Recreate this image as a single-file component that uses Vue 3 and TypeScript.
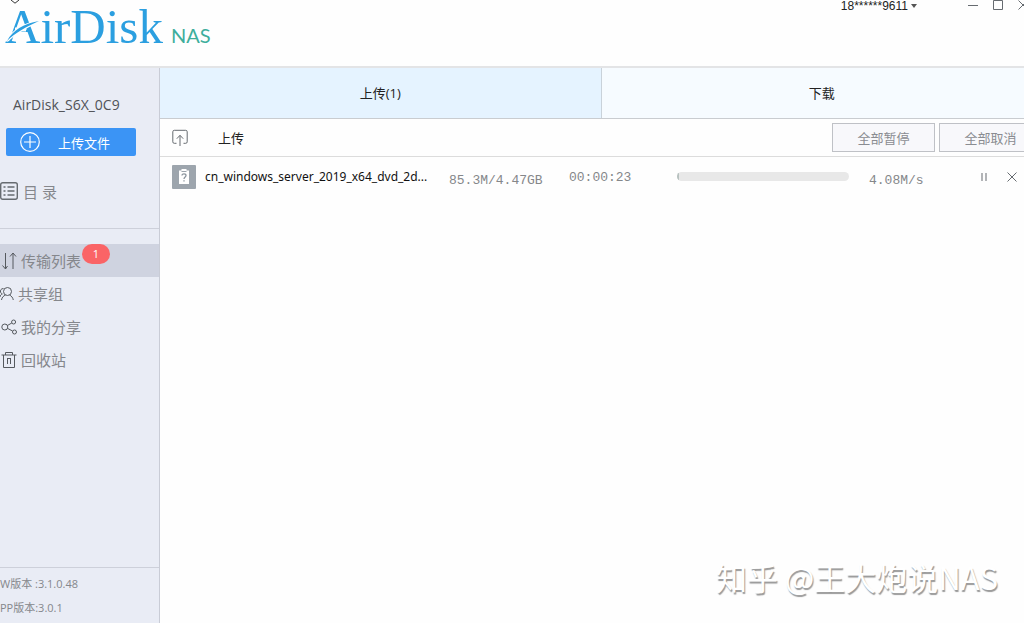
<script setup lang="ts">
import { ref } from 'vue'

interface NavItem {
  id: string
  label: string
  badge?: number
}

interface Transfer {
  name: string
  size: string
  elapsed: string
  progress: number
  speed: string
}

const account = '18******9611'
const navItems: NavItem[] = [
  { id: 'transfer', label: '传输列表', badge: 1 },
  { id: 'group', label: '共享组' },
  { id: 'share', label: '我的分享' },
  { id: 'trash', label: '回收站' },
]
const activeNav = ref('transfer')
const activeTab = ref<'upload' | 'download'>('upload')
const transfers: Transfer[] = [
  {
    name: 'cn_windows_server_2019_x64_dvd_2d...',
    size: '85.3M/4.47GB',
    elapsed: '00:00:23',
    progress: 1,
    speed: '4.08M/s',
  },
]
</script>

<template>
  <div class="window">
    <header class="titlebar">
      <svg class="corner" viewBox="0 0 10 4" aria-hidden="true"><path d="M1 0 L5 3.2 L9 0" /></svg>
      <h1 class="brand">
        <span class="brand-name">AirDisk</span>
        <svg class="swoosh" viewBox="0 0 42 24" aria-hidden="true">
          <path class="gap" d="M13 10.5H24" />
          <path class="arc" d="M5 22C11 11 21 5 37 2C24 8 13 14 5 22Z" />
        </svg>
        <span class="brand-sub">NAS</span>
      </h1>
      <div class="controls">
        <button class="account" type="button">{{ account }}<i class="caret"></i></button>
        <button class="win-btn" type="button" aria-label="最小化">
          <svg viewBox="0 0 10 10"><path d="M0 5.5H10" /></svg>
        </button>
        <button class="win-btn" type="button" aria-label="最大化">
          <svg viewBox="0 0 10 10"><path d="M0.5 0.5H9.5V9.5H0.5Z" /></svg>
        </button>
        <button class="win-btn" type="button" aria-label="关闭">
          <svg viewBox="0 0 10 10"><path d="M0.5 0.5L9.5 9.5M9.5 0.5L0.5 9.5" /></svg>
        </button>
      </div>
    </header>

    <div class="body">
      <aside class="sidebar">
        <div class="device">AirDisk_S6X_0C9</div>
        <button class="upload" type="button">
          <svg viewBox="0 0 20 20" aria-hidden="true">
            <circle cx="10" cy="10" r="9.3" />
            <path d="M10 4V16M4 10H16" />
          </svg>
          <span>上传文件</span>
        </button>
        <a class="catalog" href="#catalog">
          <svg viewBox="0 0 18 18" aria-hidden="true">
            <rect x="0.7" y="0.7" width="16.6" height="16.6" rx="2" />
            <path d="M3.5 5H5.5M3.5 9H5.5M3.5 13H5.5M7.5 5H14.5M7.5 9H14.5M7.5 13H14.5" />
          </svg>
          <span>目 录</span>
        </a>
        <nav class="nav">
          <a
            v-for="item in navItems"
            :key="item.id"
            :href="'#' + item.id"
            class="nav-item"
            :class="[item.id, { active: item.id === activeNav }]"
            @click.prevent="activeNav = item.id"
          >
            <svg v-if="item.id === 'transfer'" viewBox="0 0 16 18" aria-hidden="true">
              <path d="M4.5 1V17M1.5 13.5L4.5 17L6.5 14M12 17V1M9 4.5L12 1L15 4.5" />
            </svg>
            <svg v-else-if="item.id === 'group'" viewBox="0 0 14 18" aria-hidden="true">
              <circle cx="7.5" cy="6.5" r="4" />
              <path d="M1.5 15C2 12 3.5 11 5.5 10M9.5 10C11.5 11 12.8 12.5 13.3 15M3.5 3.5C1 3.5 0 5.5 0.6 7.2C1 8.4 1.8 8.8 2.3 9C1 9.5 0 10.5 0 12" />
            </svg>
            <svg v-else-if="item.id === 'share'" viewBox="0 0 16 18" aria-hidden="true">
              <circle cx="3.8" cy="9" r="3" />
              <circle cx="12.6" cy="4" r="2" />
              <circle cx="13.5" cy="14" r="2" />
              <path d="M6.4 7.5L10.8 5M6.5 10.4L11.6 13" />
            </svg>
            <svg v-else viewBox="0 0 16 18" aria-hidden="true">
              <path d="M0.5 4H15.5M4.5 4V1.5H11.5V4M2.5 4V16.5H13.5V4M6.5 7V13M9.5 7V13M6.5 7.5H9.5" />
            </svg>
            <span>{{ item.label }}</span>
            <b v-if="item.badge" class="badge">{{ item.badge }}</b>
          </a>
        </nav>
        <footer class="versions">
          <div>W版本 :3.1.0.48</div>
          <div>PP版本:3.0.1</div>
        </footer>
      </aside>

      <main class="main">
        <div class="tabs" role="tablist">
          <button
            class="tab"
            :class="{ selected: activeTab === 'upload' }"
            type="button"
            role="tab"
            :aria-selected="activeTab === 'upload'"
            @click="activeTab = 'upload'"
          >
            上传({{ transfers.length }})
          </button>
          <button
            class="tab"
            :class="{ selected: activeTab === 'download' }"
            type="button"
            role="tab"
            :aria-selected="activeTab === 'download'"
            @click="activeTab = 'download'"
          >
            下载
          </button>
        </div>

        <div class="toolbar">
          <svg viewBox="0 0 16 18" aria-hidden="true">
            <path d="M4.5 14.3H2.3Q0.8 14.3 0.8 12.8V2.8Q0.8 1.3 2.3 1.3H13.7Q15.2 1.3 15.2 2.8V12.8Q15.2 14.3 13.7 14.3H11.5M8 17V6.5M4.8 9.7L8 6.3L11.2 9.7" />
          </svg>
          <h2>上传</h2>
          <button class="bulk" type="button">全部暂停</button>
          <button class="bulk" type="button">全部取消</button>
        </div>

        <ul class="list">
          <li v-for="t in transfers" :key="t.name" class="row">
            <svg class="file" viewBox="0 0 24 24" aria-hidden="true">
              <rect width="24" height="24" rx="1" fill="#9da5ad" />
              <path d="M7 5.5H9.5V4H14.5V5.5H17V19H7Z" fill="#fff" />
              <path d="M9.5 6.5H14.5" stroke="#9da5ad" fill="none" />
              <path d="M10 10.5C10 8.4 14 8.4 14 10.6C14 12 12 12 12 14M12 15.3V16.6" stroke="#8b949d" stroke-width="1.3" fill="none" />
            </svg>
            <span class="name">{{ t.name }}</span>
            <span class="mono low">{{ t.size }}</span>
            <span class="mono">{{ t.elapsed }}</span>
            <div class="track" role="progressbar" :aria-valuenow="t.progress" aria-valuemin="0" aria-valuemax="100">
              <div class="fill" :style="{ width: t.progress + '%' }"></div>
            </div>
            <span class="mono low">{{ t.speed }}</span>
            <div class="actions">
              <button type="button" aria-label="暂停">
                <svg viewBox="0 0 12 12"><path d="M4 2V10M8 2V10" /></svg>
              </button>
              <button type="button" aria-label="取消">
                <svg viewBox="0 0 12 12"><path d="M1.5 1.5L10.5 10.5M10.5 1.5L1.5 10.5" /></svg>
              </button>
            </div>
          </li>
        </ul>
      </main>
    </div>

    <div class="watermark">知乎 @王大炮说NAS</div>
  </div>
</template>

<style>
body {
  margin: 0;
}
</style>

<style scoped>
.window {
  position: relative;
  display: flex;
  flex-direction: column;
  min-height: 100vh;
  overflow: hidden;
  background: #fefefe;
  color: #222;
  font-family: "Open Sans", "Noto Sans CJK SC", sans-serif;
  font-size: 13px;
}
button {
  padding: 0;
  border: 0;
  background: none;
  color: inherit;
  font: inherit;
}
a {
  color: inherit;
  text-decoration: none;
}
svg {
  flex: none;
  fill: none;
  stroke: #666b70;
}

.titlebar {
  display: flex;
  justify-content: space-between;
  align-items: flex-start;
  height: 66px;
  border-bottom: 2px solid #e3e4e6;
}
.corner {
  position: absolute;
  top: 0;
  left: 10px;
  width: 10px;
  height: 4px;
  stroke: #333;
}
.brand {
  position: relative;
  display: flex;
  align-items: baseline;
  gap: 8px;
  margin: 0;
  padding-left: 5px;
  font-weight: 400;
  line-height: 54px;
}
.brand-name {
  color: #2b9fe0;
  font-family: "Liberation Serif", serif;
  font-size: 49px;
}
.brand-sub {
  color: #3eae9c;
  font-family: Lato, sans-serif;
  font-size: 20px;
}
.swoosh {
  position: absolute;
  top: 19px;
  left: 2px;
  width: 42px;
  height: 24px;
}
.swoosh .gap {
  stroke: #fefefe;
  stroke-width: 4;
}
.swoosh .arc {
  fill: #2b9fe0;
  stroke: #fefefe;
  stroke-width: 2;
  paint-order: stroke;
}
.controls {
  display: flex;
  align-items: flex-start;
  gap: 15px;
  margin-right: -4px;
}
.account {
  display: flex;
  align-items: center;
  gap: 3px;
  margin-right: 36px;
  font-family: "Liberation Sans", sans-serif;
  font-size: 12px;
  line-height: 12px;
}
.caret {
  border: 3px solid transparent;
  border-top: 4px solid #555;
  border-bottom: 0;
}
.win-btn {
  display: flex;
}
.win-btn svg {
  width: 10px;
  height: 10px;
}

.body {
  display: flex;
  flex: 1;
}
.sidebar {
  display: flex;
  flex: none;
  flex-direction: column;
  box-sizing: border-box;
  width: 160px;
  border-right: 1px solid #c9ccd6;
  background: #e9ecf5;
  color: #85878c;
}
.device {
  padding: 27px 0 0 13px;
  color: #505257;
  font-size: 14px;
  line-height: 20px;
}
.upload {
  display: flex;
  align-items: center;
  gap: 18px;
  height: 28px;
  margin: 13px 23px 0 6px;
  padding-left: 14px;
  border-radius: 2px;
  background: #3b94f5;
  color: #fff;
}
.upload svg {
  width: 20px;
  height: 20px;
  stroke: #fff;
  stroke-width: 1.2;
}
.catalog {
  display: flex;
  align-items: center;
  gap: 5px;
  height: 70px;
  padding-bottom: 2px;
  border-bottom: 1px solid #cdd0da;
  font-size: 15px;
}
.catalog svg {
  width: 18px;
  height: 18px;
  stroke-width: 1.4;
}
.nav {
  flex: 1;
  padding-top: 15px;
}
.nav-item {
  display: flex;
  align-items: center;
  gap: 4px;
  height: 33px;
  padding-left: 1px;
  font-size: 15px;
}
.nav-item svg {
  width: 16px;
  height: 18px;
  stroke: #55595e;
}
.nav-item.group {
  padding-left: 0;
}
.nav-item.group svg {
  width: 14px;
}
.nav-item.active {
  background: #cfd3e0;
}
.badge {
  align-self: flex-start;
  width: 28px;
  margin-left: -3px;
  border-radius: 10px;
  background: #fa6466;
  color: #fff;
  font-size: 11px;
  font-weight: 400;
  line-height: 20px;
  text-align: center;
}
.versions {
  padding: 4px 0 3px;
  border-top: 1px solid #cdd0da;
  font-size: 11px;
  line-height: 24px;
  white-space: nowrap;
}

.main {
  flex: 1;
  min-width: 0;
  margin-right: -18px;
}
.tabs {
  display: flex;
  border-bottom: 1px solid #c9ccd0;
}
.tab {
  flex: 1;
  height: 50px;
  padding-bottom: 2px;
  background: #f6fbff;
}
.tab + .tab {
  border-left: 1px solid #c9d2da;
}
.tab.selected {
  background: #e5f3ff;
}
.toolbar {
  display: flex;
  align-items: center;
  gap: 4px;
  height: 37px;
  padding-left: 12px;
  border-bottom: 1px solid #dcdcdc;
}
.toolbar svg {
  width: 16px;
  height: 18px;
}
.toolbar h2 {
  flex: 1;
  margin: 0 0 0 26px;
  font-size: 13px;
  font-weight: 400;
}
.bulk {
  box-sizing: border-box;
  width: 103px;
  height: 29px;
  border: 1px solid #bfc1c6;
  background: #f8f8fb;
  color: #8a8c91;
}
.list {
  margin: 0;
  padding: 0;
  list-style: none;
}
.row {
  display: grid;
  grid-template-columns: 24px 243px 120px 108px 1fr 119px 64px;
  align-items: center;
  height: 39px;
  padding-left: 12px;
}
.file {
  width: 24px;
  height: 24px;
  stroke: none;
}
.name {
  padding-left: 9px;
  color: #111;
  font-family: "Noto Sans", sans-serif;
  font-size: 12px;
  white-space: nowrap;
}
.mono {
  padding: 2px 0 0 10px;
  color: #85878a;
  font-family: "Liberation Mono", monospace;
  white-space: nowrap;
}
.low {
  padding-top: 7px;
}
.track {
  height: 9px;
  margin: 0 10px;
  overflow: hidden;
  border-radius: 5px;
  background: #e8e8e8;
}
.fill {
  height: 9px;
  background: #b8c2c0;
}
.actions {
  display: flex;
  gap: 16px;
}
.actions button,
.actions svg {
  display: block;
  width: 12px;
  height: 12px;
}
.watermark {
  position: absolute;
  right: 26px;
  bottom: 24px;
  color: #fff;
  font-family: "Noto Sans CJK SC", sans-serif;
  font-size: 31px;
  line-height: 44px;
  text-shadow: 1px 2px 1px #999;
  pointer-events: none;
}
</style>
